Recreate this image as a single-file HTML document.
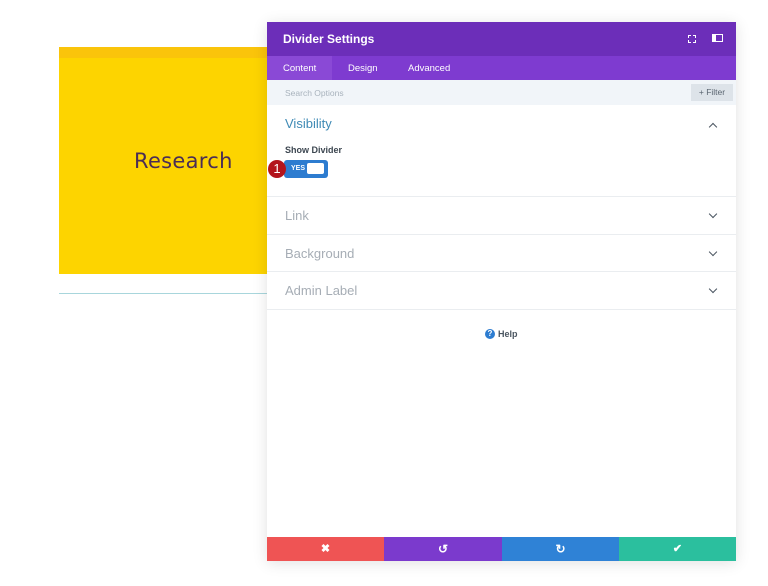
<!DOCTYPE html>
<html><head><style>
body{margin:0;width:768px;height:586px;background:#fff;position:relative;overflow:hidden;font-family:"Liberation Sans",sans-serif}
.a{position:absolute}
.sec{position:absolute;left:267px;width:469px;border-top:1px solid #eaedf0;height:37px}
.sec span{position:absolute;left:18px;top:11px;font-size:13px;color:#a6adb5}
.chev{position:absolute;right:20px;top:14px;width:5px;height:5px;border-right:1.6px solid #4a5560;border-bottom:1.6px solid #4a5560;transform:rotate(45deg)}
</style></head><body>
<div class="a" style="left:59px;top:47px;width:208px;height:227px;background:#fdd400"></div>
<div class="a" style="left:59px;top:47px;width:208px;height:11px;background:#fac40b"></div>
<div class="a" style="left:134px;top:149px;font-size:21px;color:#4a2d55;font-family:'DejaVu Sans',sans-serif;letter-spacing:0.3px">Research</div>
<div class="a" style="left:59px;top:293px;width:208px;height:1px;background:#a8d6dc"></div>
<div class="a" style="left:267px;top:22px;width:469px;height:539px;background:#fff;box-shadow:0 2px 14px rgba(0,0,0,.12)"></div>
<div class="a" style="left:267px;top:22px;width:469px;height:34px;background:#6c2eb9"></div>
<div class="a" style="left:283px;top:32px;color:#fff;font-size:12px;font-weight:bold">Divider Settings</div>
<div class="a" style="left:688px;top:35px;width:6px;height:6px;border:1px dashed #fff"></div>
<div class="a" style="left:712px;top:34px;width:6px;height:6px;border:1.5px solid #fff;border-left-width:4px"></div>
<div class="a" style="left:267px;top:56px;width:469px;height:24px;background:#7e3bd0"></div>
<div class="a" style="left:267px;top:56px;width:65px;height:24px;background:#8a49d6"></div>
<div class="a" style="left:283px;top:63px;color:#fff;font-size:9.5px">Content</div>
<div class="a" style="left:348px;top:63px;color:#fff;font-size:9.5px">Design</div>
<div class="a" style="left:408px;top:63px;color:#fff;font-size:9.5px">Advanced</div>
<div class="a" style="left:267px;top:80px;width:469px;height:25px;background:#f1f5f9"></div>
<div class="a" style="left:285px;top:88px;color:#a9b3bd;font-size:8.5px">Search Options</div>
<div class="a" style="left:691px;top:84px;width:42px;height:17px;background:#dde3e9;color:#5a6570;font-size:8.5px;line-height:17px;text-align:center">+ Filter</div>
<div class="a" style="left:285px;top:116px;font-size:13px;color:#3f8ab5">Visibility</div>
<div class="a" style="left:710px;top:124px;width:5px;height:5px;border-left:1.6px solid #4a5560;border-top:1.6px solid #4a5560;transform:rotate(45deg)"></div>
<div class="a" style="left:285px;top:145px;font-size:9px;color:#3c4650;font-weight:bold">Show Divider</div>
<div class="a" style="left:284px;top:160px;width:44px;height:18px;background:#2d7cd0;border-radius:3px"></div>
<div class="a" style="left:291px;top:165px;font-size:7px;color:#fff;font-weight:bold">YES</div>
<div class="a" style="left:307px;top:163px;width:17px;height:11px;background:#fff;border-radius:2px"></div>
<div class="a" style="left:268px;top:160px;width:18px;height:18px;border-radius:50%;background:#b3141c;color:#fff;font-size:13px;text-align:center;line-height:18px">1</div>
<div class="sec" style="top:196px"><span>Link</span><i class="chev"></i></div>
<div class="sec" style="top:234px"><span>Background</span><i class="chev"></i></div>
<div class="sec" style="top:271px"><span>Admin Label</span><i class="chev"></i></div>
<div class="sec" style="top:309px;height:1px"></div>
<div class="a" style="left:485px;top:329px;width:10px;height:10px;border-radius:50%;background:#2d7cd0;color:#fff;font-size:8px;text-align:center;line-height:10px;font-weight:bold">?</div>
<div class="a" style="left:498px;top:329px;font-size:9px;color:#4a5560;font-weight:bold">Help</div>
<div class="a" style="left:267px;top:537px;width:117px;height:24px;background:#ef5454;color:#fff;text-align:center;line-height:24px;font-size:11px;font-weight:bold">✖</div>
<div class="a" style="left:384px;top:537px;width:118px;height:24px;background:#7b3acd;color:#fff;text-align:center;line-height:24px;font-size:12px;font-weight:bold">↺</div>
<div class="a" style="left:502px;top:537px;width:117px;height:24px;background:#2f82d6;color:#fff;text-align:center;line-height:24px;font-size:12px;font-weight:bold">↻</div>
<div class="a" style="left:619px;top:537px;width:117px;height:24px;background:#2bbf9e;color:#fff;text-align:center;line-height:24px;font-size:11px;font-weight:bold">✔</div>
</body></html>
